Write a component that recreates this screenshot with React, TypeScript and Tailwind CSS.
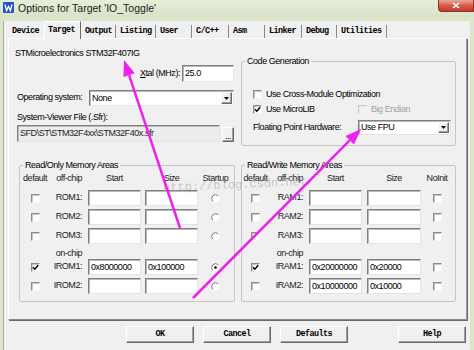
import React from 'react';

const sunken =
  'border border-t-[#7f7f7f] border-l-[#7f7f7f] border-r-[#e4e4e4] border-b-[#e4e4e4] shadow-[inset_1px_1px_0_#b9b9b9]';
const raised =
  'border border-t-white border-l-white border-r-[#696969] border-b-[#696969] shadow-[inset_-1px_-1px_0_#a0a0a0] bg-[#f0f0f0]';
const mono = "font-['Liberation_Mono','Courier_New',monospace] font-bold text-[8.5px] tracking-[-0.6px]";

const tabs = [
  { label: 'Device', w: 'w-[36px]' },
  { label: 'Target', w: 'w-[37px]', active: true },
  { label: 'Output', w: 'w-[35px]' },
  { label: 'Listing', w: 'w-[40px]' },
  { label: 'User', w: 'w-[36px]' },
  { label: 'C/C++', w: 'w-[37px]' },
  { label: 'Asm', w: 'w-[36px]' },
  { label: 'Linker', w: 'w-[37px]' },
  { label: 'Debug', w: 'w-[35px]' },
  { label: 'Utilities', w: 'w-[50px]' },
];

function Check({ checked = false, disabled = false }: { checked?: boolean; disabled?: boolean }) {
  return (
    <span
      className={`relative inline-block h-[9px] w-[9px] shrink-0 border ${
        disabled
          ? 'border-t-[#c4c4c4] border-l-[#c4c4c4] border-r-[#f4f4f4] border-b-[#f4f4f4] bg-[#f0f0f0]'
          : 'border-t-[#8c8c8c] border-l-[#8c8c8c] border-r-[#f4f4f4] border-b-[#f4f4f4] bg-white shadow-[inset_1px_1px_0_#c6c6c6]'
      }`}
    >
      {checked && (
        <svg viewBox="0 0 7 7" className="absolute left-0 top-0 h-[7px] w-[7px]">
          <path d="M1 3.3 L2.8 5.2 L6.2 1.2" fill="none" stroke="#000" strokeWidth="1.5" />
        </svg>
      )}
    </span>
  );
}

function Radio({ checked = false }: { checked?: boolean }) {
  return (
    <svg width="9" height="9" viewBox="0 0 9 9">
      <circle cx="4.5" cy="4.5" r="3.8" fill="#fff" />
      <path d="M1.8 7.2 A3.8 3.8 0 0 1 7.2 1.8" fill="none" stroke="#7a7a7a" strokeWidth="1" />
      {checked && <circle cx="4.5" cy="4.5" r="1.3" fill="#000" />}
    </svg>
  );
}

function Field({ value = '', className = '' }: { value?: string; className?: string }) {
  return (
    <div className={`${sunken} overflow-hidden whitespace-nowrap pl-[2px] leading-[14px] ${className}`}>{value}</div>
  );
}

function Select({ value, className = '' }: { value: string; className?: string }) {
  return (
    <div className={`${sunken} flex items-stretch bg-white ${className}`}>
      <span className="flex-1 self-center pl-[2px] leading-[11px]">{value}</span>
      <span className={`${raised} my-[1px] mr-[1px] flex w-[11px] items-center justify-center`}>
        <svg width="5" height="3" viewBox="0 0 5 3">
          <path d="M0 0 H5 L2.5 3 Z" fill="#000" />
        </svg>
      </span>
    </div>
  );
}

interface Row {
  label: string;
  start: string;
  size: string;
  def?: boolean;
  last?: boolean;
}

function MemGroup({
  title,
  cols,
  headers,
  rows,
  lastRadio,
  labelPr,
  startCls,
  sizeCls,
  className,
}: {
  title: string;
  cols: string;
  headers: string[];
  rows: Row[];
  lastRadio: boolean;
  labelPr: string;
  startCls: string;
  sizeCls: string;
  className: string;
}) {
  const renderRow = (r: Row, top: string) => (
    <div key={r.label} className={`grid ${cols} h-[16px] items-center ${top}`}>
      <span className="flex justify-center">
        <Check checked={r.def} />
      </span>
      <span className={`text-right text-[#222] ${labelPr}`}>{r.label}</span>
      <Field value={r.start} className={`h-[16px] bg-white ${startCls}`} />
      <Field value={r.size} className={`h-[16px] bg-white ${sizeCls}`} />
      <span className="flex justify-center">{lastRadio ? <Radio checked={r.last} /> : <Check checked={r.last} />}</span>
    </div>
  );
  return (
    <fieldset className={`rounded-[2px] border border-[#c6c6c6] pb-[7px] ${className}`}>
      <legend className="ml-[3px] px-[2px] leading-[11px]">{title}</legend>
      <div className={`mt-[2px] grid ${cols} h-[11px] leading-[11px] text-[#222]`}>
        <span className="text-center">{headers[0]}</span>
        <span className={`text-right ${labelPr}`}>{headers[1]}</span>
        <span className={`text-center ${startCls}`}>{headers[2]}</span>
        <span className={`text-center ${sizeCls}`}>{headers[3]}</span>
        <span className="text-center">{headers[4]}</span>
      </div>
      {renderRow(rows[0], 'mt-[6px]')}
      {renderRow(rows[1], 'mt-[3px]')}
      {renderRow(rows[2], 'mt-[3px]')}
      <div className={`grid ${cols} mt-[4px] h-[10px] leading-[10px] text-[#222]`}>
        <span />
        <span className={`text-right ${labelPr}`}>on-chip</span>
      </div>
      {renderRow(rows[3], 'mt-[1px]')}
      {renderRow(rows[4], 'mt-[3px]')}
    </fieldset>
  );
}

export default function App() {
  return (
    <div className="relative h-[350px] w-[474px] overflow-hidden bg-[#dbe5cc] font-['Liberation_Sans',Arial,sans-serif] text-black">
      {/* Title bar */}
      <div className="flex h-[17px] items-start bg-gradient-to-b from-[#e6eedb] to-[#d8e3c8]">
        <svg width="11" height="11" viewBox="0 0 11 11" className="ml-[3px] mt-[2px]">
          <rect width="11" height="11" rx="1" fill="#2456c8" />
          <path d="M2 2.5 L3.6 8.5 L5.5 4.5 L7.4 8.5 L9 2.5" fill="none" stroke="#fff" strokeWidth="1.3" />
        </svg>
        <span className="ml-[4px] mt-[2px] text-[10.5px] leading-[13px] text-[#1b1b1b]">
          Options for Target 'IO_Toggle'
        </span>
        <div className="ml-auto flex h-[12px] w-[36px] items-center justify-center rounded-bl-[4px] border border-t-0 border-[#8e3327] bg-gradient-to-b from-[#eaa597] via-[#d65c4a] to-[#c03a27]">
          <svg width="8" height="7" viewBox="0 0 8 7">
            <path d="M1 1 L7 6 M7 1 L1 6" stroke="#fff" strokeWidth="1.6" />
          </svg>
        </div>
      </div>

      {/* Dialog body */}
      <div className="ml-[3px] mr-[4px] h-[330px] border-l border-[#a9b19e] bg-[#f0f0f0] text-[9px] tracking-[-0.45px]">
        {/* Tabs */}
        <div className="ml-[4px] mt-[4px] flex h-[17px] items-end">
          {tabs.map((t, i) =>
            t.active ? (
              <div
                key={t.label}
                className={`${t.w} ${mono} relative z-10 -mb-px h-[18px] border-l border-t border-r border-l-white border-t-white border-r-[#696969] bg-[#f0f0f0] pl-[3px] pt-[3px] leading-[11px]`}
              >
                {t.label}
              </div>
            ) : (
              <div
                key={t.label}
                className={`${t.w} ${mono} flex h-[13px] items-center pl-[4px] leading-[11px] ${
                  i === 0 ? '' : 'border-r border-[#8a8a8a]'
                }`}
              >
                {t.label}
              </div>
            )
          )}
        </div>

        {/* Tab page */}
        <div className="ml-[4px] h-[282px] w-[459px] border border-t-white border-l-white border-r-[#a0a0a0] border-b-[#8a8a8a] shadow-[1px_1px_0_#696969]">
          <div className="flex items-start">
            {/* Left column */}
            <div className="ml-[6px] w-[219px] pt-[9px]">
              <div className="leading-[11px]">STMicroelectronics STM32F407IG</div>
              <div className="mt-[6px] flex h-[17px] items-center justify-end">
                <span>
                  <span className="underline">X</span>tal (MHz):
                </span>
                <Field value="25.0" className="ml-[2px] h-[17px] w-[52px] bg-white leading-[15px]" />
              </div>
              <div className="mt-[8px] flex h-[16px] items-center">
                <span className="pl-[2px]">Operating system:</span>
                <Select value="None" className="ml-auto h-[16px] w-[145px]" />
              </div>
              <div className="mt-[6px] pl-[2px] leading-[11px]">System-Viewer File (.Sfr):</div>
              <div className="mt-[2px] flex items-end">
                <Field
                  value="SFD\ST\STM32F4xx\STM32F40x.sfr"
                  className="ml-[2px] h-[17px] w-[203px] bg-[#ececec] leading-[15px] text-[#222]"
                />
                <span className={`${raised} ml-[2px] flex h-[15px] w-[12px] items-end justify-center leading-[9px]`}>...</span>
              </div>
            </div>

            {/* Code Generation */}
            <fieldset className="ml-[7px] mt-[17px] w-[215px] rounded-[2px] border border-[#c6c6c6] pb-[10px] pl-[11px]">
              <legend className="-ml-[8px] px-[2px] leading-[11px]">Code Generation</legend>
              <div className="pt-[20px]">
                <div className="flex h-[15px] items-center">
                  <Check />
                  <span className="ml-[4px]">Use Cross-Module Optimization</span>
                </div>
                <div className="flex h-[15px] items-center">
                  <div className="flex w-[105px] items-center">
                    <Check checked />
                    <span className="ml-[4px]">Use MicroLIB</span>
                  </div>
                  <Check disabled />
                  <span className="ml-[4px] text-[#a3a3a3]">Big Endian</span>
                </div>
                <div className="mt-[3px] flex h-[15px] items-center">
                  <span className="w-[105px]">Floating Point Hardware:</span>
                  <Select value="Use FPU" className="h-[15px] w-[93px]" />
                </div>
              </div>
            </fieldset>
          </div>

          {/* Memory areas */}
          <div className="mt-[14px] flex items-start">
            <MemGroup
              title="Read/Only Memory Areas"
              cols="grid-cols-[30px_36px_55px_57px_35px]"
              headers={['default', 'off-chip', 'Start', 'Size', 'Startup']}
              labelPr="pr-[4px]"
              startCls="ml-[2px]"
              sizeCls="ml-[4px]"
              lastRadio
              className="ml-[10px] w-[216px]"
              rows={[
                { label: 'ROM1:', start: '', size: '' },
                { label: 'ROM2:', start: '', size: '' },
                { label: 'ROM3:', start: '', size: '' },
                { label: 'IROM1:', start: '0x8000000', size: '0x100000', def: true, last: true },
                { label: 'IROM2:', start: '', size: '' },
              ]}
            />
            <MemGroup
              title="Read/Write Memory Areas"
              cols="grid-cols-[27px_37px_56px_59px_32px]"
              headers={['default', 'off-chip', 'Start', 'Size', 'NoInit']}
              labelPr="pr-[3px]"
              startCls="ml-[3px]"
              sizeCls="ml-[5px]"
              lastRadio={false}
              className="ml-[6px] w-[215px]"
              rows={[
                { label: 'RAM1:', start: '', size: '' },
                { label: 'RAM2:', start: '', size: '' },
                { label: 'RAM3:', start: '', size: '' },
                { label: 'IRAM1:', start: '0x20000000', size: '0x20000', def: true },
                { label: 'IRAM2:', start: '0x10000000', size: '0x10000' },
              ]}
            />
          </div>
        </div>

        {/* Dialog buttons */}
        <div className="ml-[122px] mt-[6px] flex gap-[9px]">
          {['OK', 'Cancel', 'Defaults'].map((b) => (
            <button key={b} className={`${raised} ${mono} h-[17px] w-[68px] leading-[11px]`}>
              {b}
            </button>
          ))}
          <button className={`${raised} ${mono} ml-[41px] h-[17px] w-[68px] leading-[11px]`}>Help</button>
        </div>
      </div>

      {/* Watermark */}
      <div className="pointer-events-none absolute left-[163px] top-[178px] -rotate-[2.5deg] font-['Liberation_Mono',monospace] text-[12px] leading-[14px] text-[#a8a8a8]/60">
        http://blog.csdn.net/
      </div>

      {/* Annotation arrows */}
      <svg className="pointer-events-none absolute left-0 top-0" width="474" height="350" viewBox="0 0 474 350">
        <line x1="180" y1="228" x2="129.1" y2="75.2" stroke="#ee22ee" strokeWidth="2.5" />
        <polygon points="124,60 134.8,73.3 123.4,77.1" fill="#ee22ee" />
        <line x1="193" y1="298" x2="349.7" y2="140.3" stroke="#ee22ee" strokeWidth="2.5" />
        <polygon points="361,129 354,144.6 345.5,136.1" fill="#ee22ee" />
      </svg>
    </div>
  );
}
